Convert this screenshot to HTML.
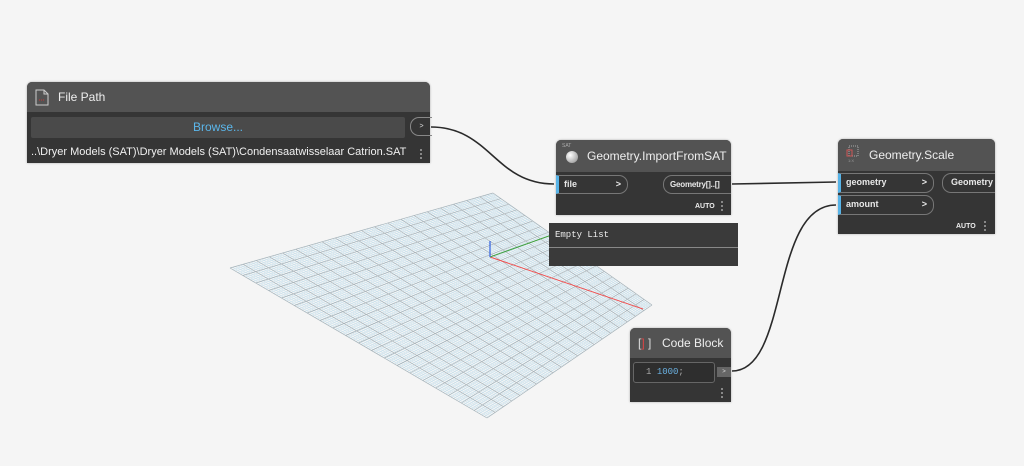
<!DOCTYPE html>
<html><head><meta charset="utf-8"><style>
*{margin:0;padding:0;box-sizing:border-box}
body{width:1024px;height:466px;background:#f5f5f5;position:relative;overflow:hidden;font-family:"Liberation Sans","DejaVu Sans",sans-serif}
.node{position:absolute;background:#353535;border-radius:5px 5px 0 0;box-shadow:0 0 2px rgba(0,0,0,.3)}
.hdr{position:absolute;left:0;right:0;top:0;background:#535353;border-radius:5px 5px 0 0;color:#eee;font-size:12px}
.pill{position:absolute;border:1px solid #777;border-radius:9px;color:#e8e8e8;font-size:9px;line-height:17px;font-weight:bold;white-space:nowrap;overflow:hidden}
.inp{border-left:3px solid #58b4e8;border-radius:0 9px 9px 0;padding-left:5px}
.gt{position:absolute;right:6px;top:0}
.auto{position:absolute;color:#eee;font-size:7px;font-weight:bold}
.dots{position:absolute;width:2px;height:12px;background:repeating-linear-gradient(#888 0 2px,transparent 2px 4px)}
.mono{font-family:"Liberation Mono","DejaVu Sans Mono",monospace}
</style></head><body>
<svg id="g" width="1024" height="466" style="position:absolute;left:0;top:0"></svg>

<!-- File Path -->
<div class="node" style="left:27px;top:82px;width:403px;height:81px">
 <div class="hdr" style="height:30px">
  <svg width="14" height="17" style="position:absolute;left:8px;top:7px"><path d="M1 1H9L13 5V16H1Z M9 1V5H13" fill="none" stroke="#ccc" stroke-width="1"/><path d="M4 11H10" stroke="#c33" stroke-dasharray="1 1"/></svg>
  <span style="position:absolute;left:31px;top:8px">File Path</span></div>
 <div style="position:absolute;left:4px;top:35px;width:374px;height:21px;background:#4a4a4a;border-radius:2px;color:#5bb6ea;font-size:12px;text-align:center;line-height:21px">Browse...</div>
 <div style="position:absolute;left:383px;top:35px;width:22px;height:19px;border:1px solid #888;border-right:none;border-radius:9px 0 0 9px;color:#ddd;font-size:7px;line-height:17px;text-align:center">&gt;</div>
 <div style="position:absolute;left:4px;top:64px;color:#f0f0f0;font-size:11px;letter-spacing:0;white-space:nowrap">..\Dryer Models (SAT)\Dryer Models (SAT)\Condensaatwisselaar Catrion.SAT</div>
 <div class="dots" style="left:393px;top:67px"></div>
</div>

<!-- ImportFromSAT -->
<div class="node" style="left:556px;top:140px;width:175px;height:75px">
 <div class="hdr" style="height:32px">
  <span style="position:absolute;left:6px;top:3px;font-size:5px;color:#aaa">SAT</span>
  <div style="position:absolute;left:10px;top:11px;width:12px;height:12px;border-radius:50%;background:radial-gradient(circle at 35% 35%,#fff,#888)"></div>
  <span style="position:absolute;left:31px;top:9px">Geometry.ImportFromSAT</span></div>
 <div class="pill inp" style="left:0;top:35px;width:72px;height:19px">file<span class="gt">&gt;</span></div>
 <div class="pill" style="left:107px;top:35px;width:68px;height:19px;border-right:none;border-radius:9px 0 0 9px;padding-left:6px;font-size:8px;letter-spacing:-0.2px">Geometry[]..[]</div>
 <div class="auto" style="left:139px;top:63px">AUTO</div>
 <div class="dots" style="left:165px;top:61px"></div>
</div>

<!-- Empty List -->
<div style="position:absolute;left:549px;top:223px;width:189px;height:43px;background:#3a3a3a">
 <div class="mono" style="position:absolute;left:6px;top:7px;color:#eee;font-size:9px">Empty List</div>
 <div style="position:absolute;left:0;right:0;top:24px;height:1px;background:#888"></div>
</div>

<!-- Geometry.Scale -->
<div class="node" style="left:838px;top:139px;width:157px;height:95px">
 <div class="hdr" style="height:32px">
  <svg width="14" height="18" style="position:absolute;left:8px;top:6px"><rect x="3" y="1" width="9" height="10" fill="none" stroke="#aaa" stroke-dasharray="1 1"/><rect x="1" y="5" width="5" height="6" fill="none" stroke="#c55"/><text x="2" y="17" font-size="4" fill="#999">1:X</text></svg>
  <span style="position:absolute;left:31px;top:9px">Geometry.Scale</span></div>
 <div class="pill inp" style="left:0;top:34px;width:96px;height:20px">geometry<span class="gt">&gt;</span></div>
 <div class="pill inp" style="left:0;top:56px;width:96px;height:20px">amount<span class="gt">&gt;</span></div>
 <div class="pill" style="left:104px;top:34px;width:53px;height:20px;border-right:none;border-radius:9px 0 0 9px;padding-left:8px">Geometry</div>
 <div class="auto" style="left:118px;top:84px">AUTO</div>
 <div class="dots" style="left:146px;top:82px"></div>
</div>

<!-- Code Block -->
<div class="node" style="left:630px;top:328px;width:101px;height:74px">
 <div class="hdr" style="height:30px">
  <span style="position:absolute;left:8px;top:8px;color:#ddd">[<span style="color:#d44">]</span> ]</span>
  <span style="position:absolute;left:32px;top:8px">Code Block</span></div>
 <div class="mono" style="position:absolute;left:3px;top:34px;width:82px;height:21px;border:1px solid #666;border-radius:3px;background:#2e2e2e;font-size:9px;line-height:19px;padding-left:12px;color:#aaa">1 <span style="color:#6ab0e0">1000</span>;</div>
 <div style="position:absolute;left:87px;top:39px;width:14px;height:10px;background:#666;color:#ddd;font-size:6px;text-align:center;line-height:10px">&gt;</div>
 <div class="dots" style="left:91px;top:60px"></div>
</div>

<svg width="1024" height="466" style="position:absolute;left:0;top:0;pointer-events:none">
 <g fill="none" stroke="#2a2a2a" stroke-width="1.6">
  <path d="M431 127 C490 127 495 184 554 184"/>
  <path d="M732 184 L836 182"/>
  <path d="M732 371 C790 371 770 205 836 205"/>
 </g>
</svg>
<script>
var s=document.getElementById('g'),A=[230,268],B=[493,193],C=[652,305],D=[487,418],h='';
function L(p,q,t){return[p[0]+(q[0]-p[0])*t,p[1]+(q[1]-p[1])*t]}
var N=100,mi='',ma='';
for(var i=0;i<=N;i++){var t=i/N,M=(i%5==0);
var p=L(A,B,t),q=L(D,C,t),l='<line x1="'+p[0].toFixed(1)+'" y1="'+p[1].toFixed(1)+'" x2="'+q[0].toFixed(1)+'" y2="'+q[1].toFixed(1)+'"/>';
p=L(A,D,t);q=L(B,C,t);l+='<line x1="'+p[0].toFixed(1)+'" y1="'+p[1].toFixed(1)+'" x2="'+q[0].toFixed(1)+'" y2="'+q[1].toFixed(1)+'"/>';
if(M)ma+=l;else mi+=l;}
h='<g stroke="#c8e0ec" stroke-width="0.6">'+mi+'</g><g stroke="#a4b2b9" stroke-width="0.7">'+ma+'</g>';
h+='<line x1="490" y1="257" x2="643" y2="309" stroke="#f05050" stroke-width="1"/>';
h+='<line x1="490" y1="257" x2="560" y2="232" stroke="#40a040" stroke-width="1"/>';
h+='<line x1="490" y1="257" x2="490" y2="241" stroke="#3060e0" stroke-width="1.2"/>';
s.innerHTML=h;
</script>
</body></html>
